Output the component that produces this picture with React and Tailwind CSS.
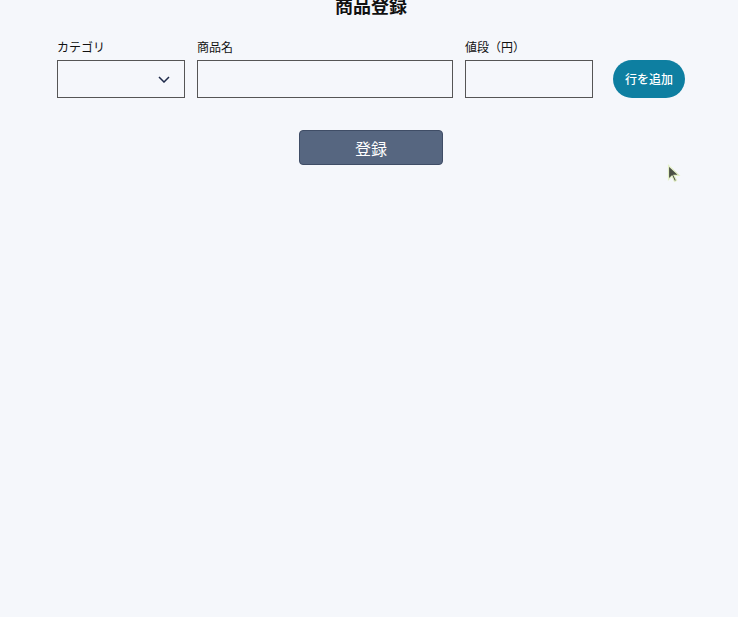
export default function App() {
  const font = { fontFamily: '"Noto Sans CJK JP", "Noto Sans", sans-serif' };

  return (
    <div className="relative min-h-screen bg-[#f5f7fb] text-[#111]" style={font}>
      <h1 className="-mt-[7px] pl-[4px] text-center text-[18px] font-bold leading-[24px]">商品登録</h1>

      <div className="mt-[22px] flex items-end gap-[12px] pl-[57px]">
        <div className="flex flex-col gap-[5px]">
          <label className="text-[12px] leading-[16px]">カテゴリ</label>
          <div className="flex h-[38px] w-[128px] items-center justify-end border border-[#555] pr-[14px]">
            <svg width="12" height="7" viewBox="0 0 12 7" fill="none">
              <path d="M1 1l5 5 5-5" stroke="#1e2a4a" strokeWidth="1.5" />
            </svg>
          </div>
        </div>
        <div className="flex flex-col gap-[5px]">
          <label className="text-[12px] leading-[16px]">商品名</label>
          <input className="h-[38px] w-[256px] border border-[#555] bg-transparent px-2 outline-none" />
        </div>
        <div className="flex flex-col gap-[5px]">
          <label className="text-[12px] leading-[16px]">値段（円）</label>
          <input className="h-[38px] w-[128px] border border-[#555] bg-transparent px-2 outline-none" />
        </div>
        <button className="ml-[8px] h-[38px] w-[72px] rounded-full bg-[#0e7fa1] text-[12px] font-medium text-white">
          行を追加
        </button>
      </div>

      <div className="mt-[32px] flex justify-center pl-[4px]">
        <button className="h-[35px] w-[144px] rounded-[4px] border border-[#3f4d66] bg-[#566680] pt-[1px] text-[16px] text-white">
          登録
        </button>
      </div>

      <svg className="absolute left-[667px] top-[171px]" width="14" height="20" viewBox="0 0 14 20">
        <path d="M1.5 1.5v14l3.5-3.5 2.5 5.5 2-1-2.5-5.2h5z" fill="#4a4f45" stroke="#e4f0c8" strokeWidth="1.2" />
      </svg>
    </div>
  );
}
